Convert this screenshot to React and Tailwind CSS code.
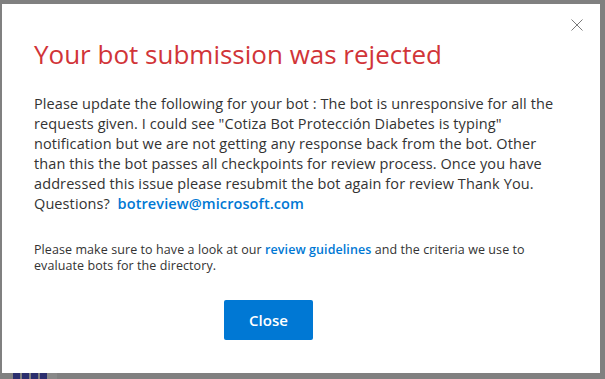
import React from 'react'

function CloseIcon() {
  return (
    <svg width="12" height="12" viewBox="0 0 12 12" fill="none" stroke="currentColor" strokeWidth="1">
      <path d="M0.5 0.5l11 11M11.5 0.5l-11 11" />
    </svg>
  )
}

export default function App() {
  return (
    <div
      className="w-[605px] h-[379px] overflow-hidden bg-[#808080] pt-[4px] pl-[2px]"
      style={{ fontFamily: '"Open Sans", "Noto Sans", sans-serif' }}
    >
      <div className="relative w-[598px] h-[369px] bg-white px-[32px] pt-[32px]">
        <button className="absolute top-[15px] right-[17px] text-[#7a7a7a]" title="Close">
          <CloseIcon />
        </button>

        <h1 className="text-[26px] leading-[36px] text-[#d13438] font-normal">
          Your bot submission was rejected
        </h1>

        <p className="mt-[22px] text-[14.5px] leading-[20px] tracking-[0.1px] text-[#333333]">
          Please update the following for your bot : The bot is unresponsive for all the
          requests given. I could see "Cotiza Bot Protección Diabetes is typing"
          notification but we are not getting any response back from the bot. Other
          than this the bot passes all checkpoints for review process. Once you have
          addressed this issue please resubmit the bot again for review Thank You.
          <br />
          Questions?&nbsp;{' '}
          <a href="#" className="font-semibold text-[#0078d4]">
            botreview@microsoft.com
          </a>
        </p>

        <p className="mt-[28px] text-[12.5px] leading-[16px] tracking-[0.08px] text-[#333333]">
          Please make sure to have a look at our{' '}
          <a href="#" className="font-semibold text-[#0078d4]">
            review guidelines
          </a>{' '}
          and the criteria we use to evaluate bots for the directory.
        </p>

        <button className="block mt-[26px] ml-[190px] w-[89px] h-[40px] rounded-[2px] bg-[#0078d4] text-white text-[15px] font-semibold">
          Close
        </button>
      </div>

      <div className="flex items-start pl-[11px]">
        <div className="flex gap-[2px]">
          <div className="w-[7px] h-[6px] bg-[#2b2e6e]" />
          <div className="w-[7px] h-[6px] bg-[#2b2e6e]" />
          <div className="w-[7px] h-[6px] bg-[#2b2e6e]" />
          <div className="w-[7px] h-[6px] bg-[#2b2e6e]" />
        </div>
        <div className="w-[10px] h-[6px] bg-[#888888]" />
      </div>
    </div>
  )
}
